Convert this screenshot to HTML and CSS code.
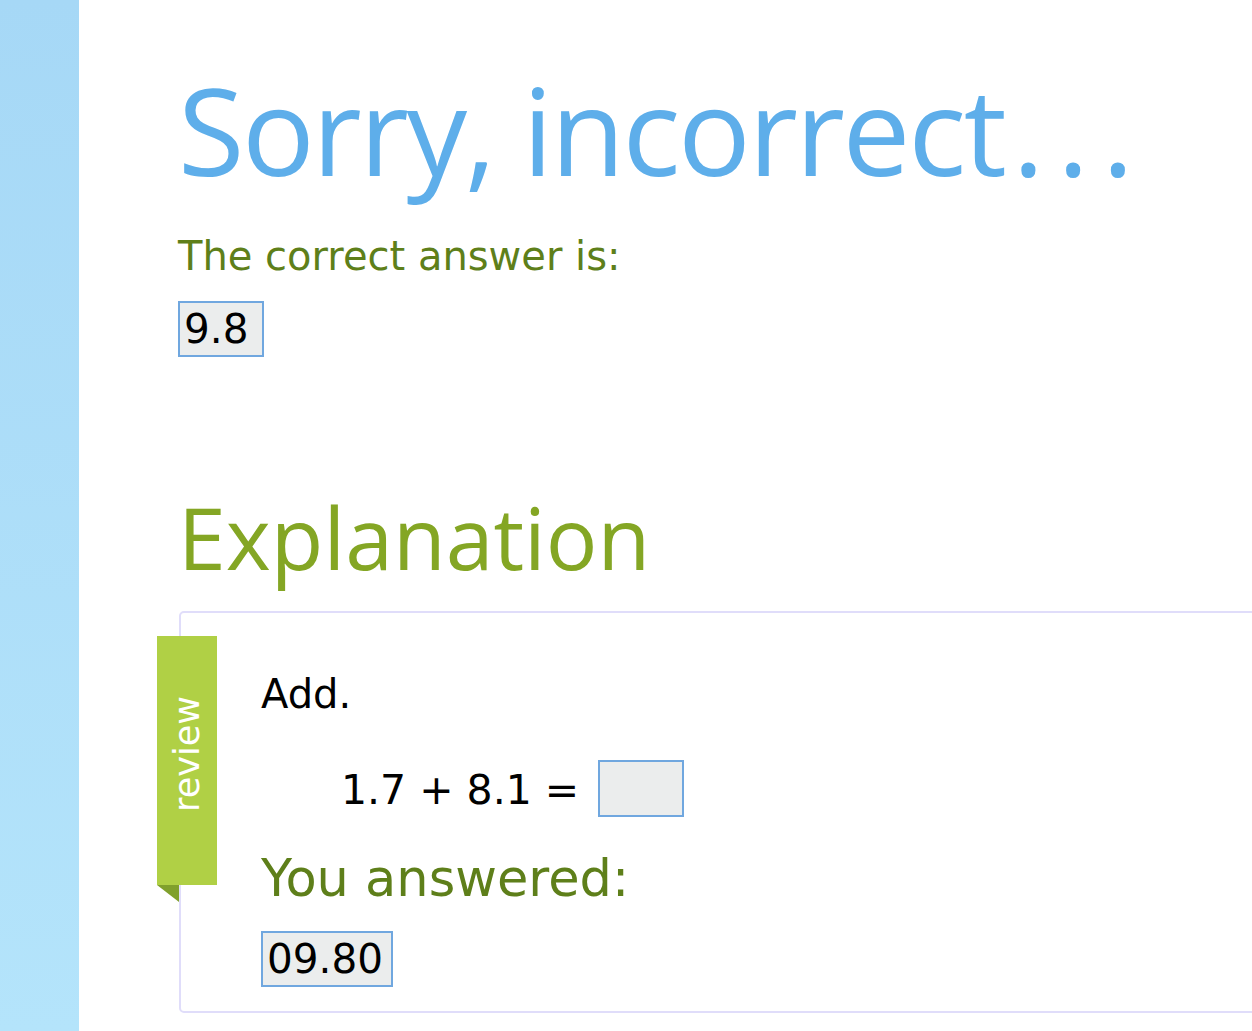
FILE: index.html
```html
<!DOCTYPE html>
<html>
<head>
<meta charset="utf-8">
<link rel="stylesheet" href="styles.css">
</head>
<body>
<div class="page">
  <aside class="sidebar"></aside>
  <main class="main">
    <h1 class="title">Sorry, incorrect<span class="dots">...</span></h1>
    <p class="label">The correct answer is:</p>
    <div class="answer-row"><span class="ans-box">9.8</span></div>
    <h2 class="explain">Explanation</h2>
    <section class="card">
      <div class="ribbon"><span class="ribbon-text">review</span></div>
      <p class="q-title">Add.</p>
      <div class="equation">
        <span class="eq-text">1.7 + 8.1 =</span>
        <span class="blank-box"></span>
      </div>
      <p class="you">You answered:</p>
      <div class="answer-row answer-row--you"><span class="ans-box">09.80</span></div>
    </section>
  </main>
</div>
</body>
</html>
```
FILE: styles.css
```css
html, body {
  margin: 0;
  padding: 0;
  background: #ffffff;
  overflow: hidden;
}
body {
  font-family: "DejaVu Sans", Verdana, sans-serif;
  color: #000;
}
.page {
  display: flex;
  min-height: 1031px;
}
.sidebar {
  width: 79px;
  flex: 0 0 79px;
  background: linear-gradient(#a6d8f6, #b4e4fb);
}
.main {
  flex: 1;
  padding-left: 99px;
  min-width: 0;
}
.title {
  margin: 59px 0 0 0;
  font-family: "Open Sans", sans-serif;
  font-weight: 400;
  font-size: 121px;
  line-height: 140px;
  letter-spacing: -2.4px;
  color: #5eaeea;
  white-space: nowrap;
}
.dots {
  letter-spacing: 13px;
  margin-left: 8px;
}
.label {
  margin: 35px 0 0 0;
  font-size: 40px;
  line-height: 44px;
  color: #5e7f1a;
}
.answer-row {
  margin-top: 23px;
  display: flex;
}
.answer-row--you {
  margin-top: 24px;
}
.ans-box {
  display: inline-block;
  box-sizing: border-box;
  min-width: 86px;
  border: 2px solid #70a7df;
  background: #ebeded;
  font-size: 40.5px;
  line-height: 52px;
  padding: 0 8px 0 4px;
  color: #000;
}
.explain {
  margin: 130px 0 0 0;
  font-family: "Open Sans", sans-serif;
  font-weight: 400;
  font-size: 86px;
  line-height: 100px;
  color: #84a624;
}
.card {
  position: relative;
  margin: 24px 0 0 1px;
  width: 1200px;
  border: 2px solid #e0ddfa;
  border-radius: 5px 0 0 5px;
  padding: 59px 0 24px 80px;
}
.ribbon {
  position: absolute;
  left: -24px;
  top: 23px;
  width: 60px;
  height: 249px;
  background: #b0d045;
  display: flex;
  align-items: center;
  justify-content: center;
}
.ribbon::after {
  content: "";
  position: absolute;
  left: 0;
  top: 100%;
  border-top: 17px solid #80a02c;
  border-left: 22px solid transparent;
}
.ribbon-text {
  transform: translateY(-7px) rotate(-90deg);
  color: #fff;
  font-size: 35px;
  white-space: nowrap;
}
.q-title {
  margin: 0;
  font-size: 40px;
  line-height: 44px;
}
.equation {
  margin: 44px 0 0 80px;
  display: flex;
  align-items: flex-start;
  gap: 19px;
}
.eq-text {
  font-size: 41px;
  line-height: 57px;
  padding-top: 2px;
  white-space: pre;
}
.blank-box {
  width: 82px;
  height: 53px;
  border: 2px solid #70a7df;
  background: #ebeded;
}
.you {
  margin: 32px 0 0 0;
  font-size: 51px;
  line-height: 56px;
  color: #5e7f1a;
}
```
